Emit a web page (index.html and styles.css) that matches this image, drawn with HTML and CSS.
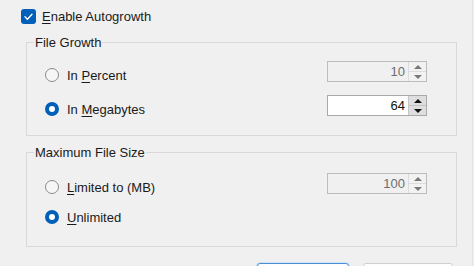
FILE: index.html
```html
<!DOCTYPE html>
<html>
<head>
<meta charset="utf-8">
<link rel="stylesheet" href="styles.css">
</head>
<body>
<div class="dialog">
  <label class="check-row">
    <span class="checkbox"><svg width="15" height="15" viewBox="0 0 15 15"><path d="M4 7.8 L6.4 10.2 L11 5.2" fill="none" stroke="#fff" stroke-width="1.4" stroke-linecap="round" stroke-linejoin="round"/></svg></span>
    <span class="text"><u>E</u>nable Autogrowth</span>
  </label>

  <fieldset class="group group-growth">
    <legend>File Growth</legend>
    <div class="rows rows-growth">
      <div class="row">
        <span class="radio"></span><span class="label">In <u>P</u>ercent</span>
        <div class="spin disabled"><span class="value">10</span><span class="arrows"><span class="arrow up"></span><span class="arrow down"></span></span></div>
      </div>
      <div class="row">
        <span class="radio checked"></span><span class="label">In <u>M</u>egabytes</span>
        <div class="spin"><span class="value">64</span><span class="arrows"><span class="arrow up"></span><span class="arrow down"></span></span></div>
      </div>
    </div>
  </fieldset>

  <fieldset class="group group-max">
    <legend>Maximum File Size</legend>
    <div class="rows rows-max">
      <div class="row">
        <span class="radio"></span><span class="label"><u>L</u>imited to (MB)</span>
        <div class="spin disabled"><span class="value">100</span><span class="arrows"><span class="arrow up"></span><span class="arrow down"></span></span></div>
      </div>
      <div class="row">
        <span class="radio checked"></span><span class="label"><u>U</u>nlimited</span>
      </div>
    </div>
  </fieldset>

  <div class="buttons">
    <button class="btn btn-default" aria-label="OK"></button>
    <button class="btn" aria-label="Cancel"></button>
  </div>
</div>
</body>
</html>
```
FILE: styles.css
```css
html, body {
  margin: 0;
  padding: 0;
  background: #f0f0f0;
  overflow: hidden;
}
body {
  font-family: "Liberation Sans", Arial, sans-serif;
  font-size: 13px;
  color: #1a1a1a;
  width: 474px;
  height: 266px;
}
.dialog {
  width: 473px;
  height: 266px;
  border-right: 1px solid #e4e4e4;
  padding-top: 8px;
  box-sizing: border-box;
  overflow: hidden;
}
u {
  text-decoration-thickness: 1px;
  text-underline-offset: 2px;
}
.check-row {
  display: flex;
  align-items: center;
  height: 17px;
  padding-left: 21px;
}
.checkbox {
  width: 15px;
  height: 15px;
  border-radius: 3px;
  background: #005fb8;
  display: block;
}
.checkbox svg { display: block; }
.check-row .text {
  margin-left: 6px;
  line-height: 17px;
}
.group {
  margin: 10px 0 0 26px;
  width: 431px;
  box-sizing: border-box;
  border: 1px solid #d9d9d9;
  padding: 13px 29px 14px 7px;
  min-inline-size: 0;
}
.group legend {
  padding: 0 1px;
  line-height: 15px;
}
.group-max {
  margin-top: 9px;
  padding-top: 15px;
  padding-bottom: 17px;
}
.rows {
  display: flex;
  flex-direction: column;
  padding-left: 11px;
}
.rows-growth { gap: 10px; }
.rows-max { gap: 6px; }
.row {
  display: flex;
  align-items: center;
  height: 24px;
}
.radio {
  width: 14px;
  height: 14px;
  box-sizing: border-box;
  border-radius: 50%;
  border: 1px solid #8a8a8a;
  background: #f6f6f6;
  flex: none;
}
.radio.checked {
  border: 4.5px solid #005fb8;
  background: #fff;
}
.label {
  margin-left: 8px;
  line-height: 17px;
}
.spin {
  margin-left: auto;
  margin-bottom: 7px;
  width: 100px;
  height: 21px;
  box-sizing: border-box;
  border: 1px solid #a9a9a9;
  background: #fff;
  display: flex;
}
.spin .value {
  flex: 1;
  text-align: right;
  line-height: 19px;
  padding-right: 3px;
  color: #111;
}
.spin .arrows {
  width: 17px;
  display: flex;
  flex-direction: column;
  background: #dedede;
  border-left: 1px solid #c6c6c6;
}
.arrow {
  flex: 1;
  display: flex;
  align-items: center;
  justify-content: center;
}
.arrow.up { border-bottom: 1px solid #c4c4c4; }
.arrow::after {
  content: "";
  width: 0;
  height: 0;
  border-left: 4px solid transparent;
  border-right: 4px solid transparent;
}
.arrow.up::after { border-bottom: 4px solid #111; }
.arrow.down::after { border-top: 4px solid #111; }
.spin.disabled {
  background: #f0f0f0;
  border-color: #bcbcbc;
}
.spin.disabled .value { color: #6d6d6d; }
.spin.disabled .arrows {
  background: #f2f2f2;
  border-left-color: #dcdcdc;
}
.spin.disabled .arrow.up { border-bottom-color: #dcdcdc; }
.spin.disabled .arrow.up::after { border-bottom-color: #7a7a7a; }
.spin.disabled .arrow.down::after { border-top-color: #7a7a7a; }
.buttons {
  display: flex;
  justify-content: flex-end;
  align-items: flex-start;
  gap: 14px;
  margin-top: 15px;
  padding-right: 19px;
  padding-top: 1px;
  height: 4px;
  overflow: hidden;
}
.btn {
  flex: none;
  height: 23px;
  width: 90px;
  border: 1px solid #d0d0d0;
  border-radius: 3px;
  background: #fdfdfd;
  padding: 0;
}
.btn-default {
  width: 92px;
  border: 1px solid #4c8fd6;
  box-shadow: 0 0 0 1px #cfe3f7;
}
```
